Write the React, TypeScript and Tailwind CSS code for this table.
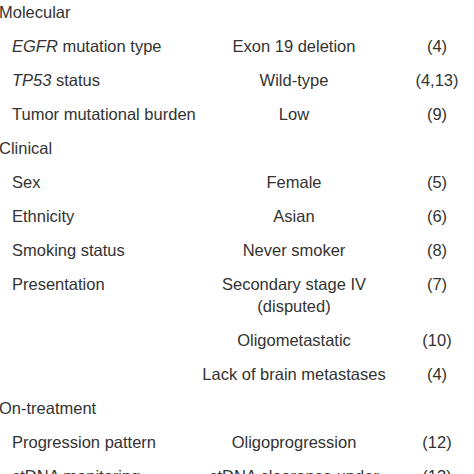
import React from 'react';

interface Row {
  label: React.ReactNode;
  value?: React.ReactNode;
  refs?: string;
  header?: boolean;
}

const rows: Row[] = [
  { label: 'Molecular', header: true },
  { label: <><i>EGFR</i> mutation type</>, value: 'Exon 19 deletion', refs: '(4)' },
  { label: <><i>TP53</i> status</>, value: 'Wild-type', refs: '(4,13)' },
  { label: 'Tumor mutational burden', value: 'Low', refs: '(9)' },
  { label: 'Clinical', header: true },
  { label: 'Sex', value: 'Female', refs: '(5)' },
  { label: 'Ethnicity', value: 'Asian', refs: '(6)' },
  { label: 'Smoking status', value: 'Never smoker', refs: '(8)' },
  { label: 'Presentation', value: <>Secondary stage IV<br />(disputed)</>, refs: '(7)' },
  { label: '', value: 'Oligometastatic', refs: '(10)' },
  { label: '', value: 'Lack of brain metastases', refs: '(4)' },
  { label: 'On-treatment', header: true },
  { label: 'Progression pattern', value: 'Oligoprogression', refs: '(12)' },
  { label: 'ctDNA monitoring', value: <>ctDNA clearance under<br />treatment</>, refs: '(13)' },
];

export default function App() {
  return (
    <div
      className="w-[474px] h-[474px] overflow-hidden bg-white text-[#333333] text-[16.5px] leading-[22px]"
      style={{ fontFamily: '"Liberation Sans", Arial, sans-serif' }}
    >
      <div className="-mt-[5px] -ml-[1px] grid grid-cols-[201px_188px_98px]">
        {rows.map((row, i) =>
          row.header ? (
            <div key={i} className="col-span-3 py-[6px]">
              {row.label}
            </div>
          ) : (
            <React.Fragment key={i}>
              <div className="py-[6px] pl-[13px] whitespace-nowrap">{row.label}</div>
              <div className="py-[6px] text-center whitespace-nowrap">{row.value}</div>
              <div className="py-[6px] text-center">{row.refs}</div>
            </React.Fragment>
          )
        )}
      </div>
    </div>
  );
}
